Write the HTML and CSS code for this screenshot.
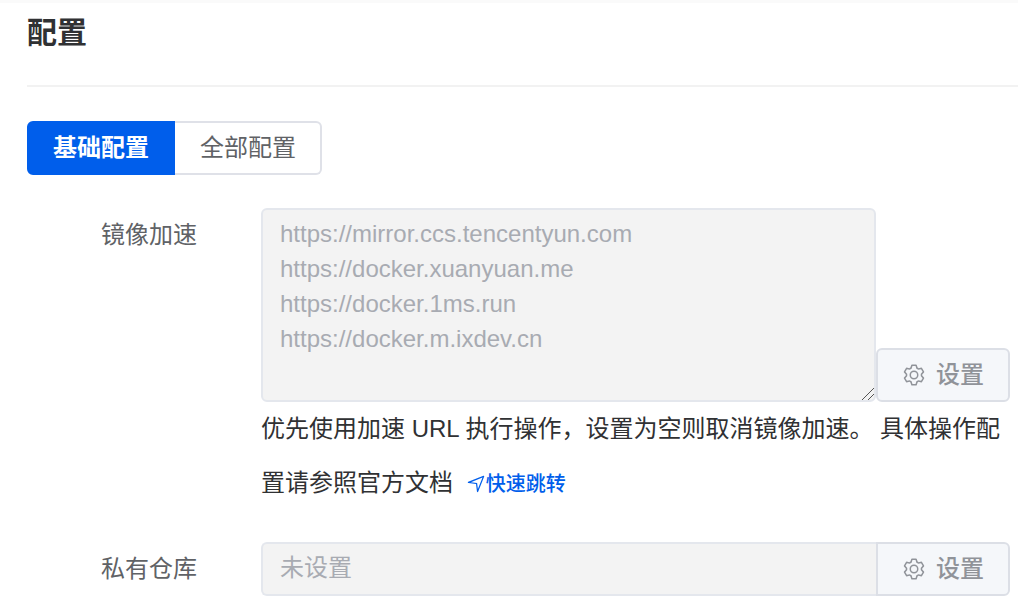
FILE: index.html
```html
<!DOCTYPE html>
<html lang="zh-CN">
<head>
<meta charset="utf-8">
<meta name="viewport" content="width=device-width, initial-scale=1">
<title>配置</title>
<link rel="stylesheet" href="styles.css">
</head>
<body>
<svg class="sprite" aria-hidden="true">
  <symbol id="gear" viewBox="0 0 1024 1024">
    <path d="M600.704 64a32 32 0 0 1 30.464 22.208l35.2 109.376c14.784 7.232 28.928 15.36 42.432 24.512l112.384-24.192a32 32 0 0 1 34.432 15.36L944.32 364.8a32 32 0 0 1-4.032 37.504l-77.12 85.12a357.12 357.12 0 0 1 0 49.024l77.12 85.248a32 32 0 0 1 4.032 37.504l-88.704 153.6a32 32 0 0 1-34.432 15.296L708.8 803.904c-13.44 9.088-27.648 17.28-42.368 24.512l-35.264 109.376A32 32 0 0 1 600.704 960H423.296a32 32 0 0 1-30.464-22.208L357.696 828.48a351.616 351.616 0 0 1-42.56-24.64l-112.32 24.256a32 32 0 0 1-34.432-15.36L79.68 659.2a32 32 0 0 1 4.032-37.504l77.12-85.248a357.12 357.12 0 0 1 0-48.896l-77.12-85.248A32 32 0 0 1 79.68 364.8l88.704-153.6a32 32 0 0 1 34.432-15.296l112.32 24.256c13.568-9.152 27.776-17.408 42.56-24.64l35.2-109.312A32 32 0 0 1 423.232 64H600.64zm-23.424 64H446.72l-36.352 113.088-24.512 11.968a294.113 294.113 0 0 0-34.816 20.096l-22.656 15.36-116.224-25.088-65.28 113.152 79.68 88.192-1.92 27.136a293.12 293.12 0 0 0 0 40.192l1.92 27.136-79.808 88.192 65.344 113.152 116.224-25.024 22.656 15.296a294.113 294.113 0 0 0 34.816 20.096l24.512 11.968L446.72 896h130.688l36.48-113.152 24.448-11.904a288.282 288.282 0 0 0 34.752-20.096l22.592-15.296 116.288 25.024 65.28-113.152-79.744-88.192 1.92-27.136a293.12 293.12 0 0 0 0-40.256l-1.92-27.136 79.808-88.128-65.344-113.152-116.288 24.96-22.592-15.232a287.616 287.616 0 0 0-34.752-20.096l-24.448-11.904L577.344 128zM512 320a192 192 0 1 1 0 384 192 192 0 0 1 0-384m0 64a128 128 0 1 0 0 256 128 128 0 0 0 0-256"/>
  </symbol>
  <symbol id="plane" viewBox="0 0 1024 1024">
    <path d="m249.6 417.088 319.744 43.072 39.168 310.272L845.12 178.88 249.6 417.088zm-129.024 47.168a32 32 0 0 1-7.68-61.44l777.792-311.04a32 32 0 0 1 41.6 41.6l-310.336 775.68a32 32 0 0 1-61.44-7.808L512 516.992l-391.424-52.736z"/>
  </symbol>
</svg>
<main class="page">
  <header class="page-header"><h1 class="title">配置</h1></header>
  <div class="tabs" role="radiogroup" aria-label="配置">
    <label class="tab"><input class="tab-input" type="radio" name="mode" checked><span class="tab-text">基础配置</span></label>
    <label class="tab"><input class="tab-input" type="radio" name="mode"><span class="tab-text">全部配置</span></label>
  </div>
  <form class="form">
    <div class="row">
      <label class="label" for="mirrors">镜像加速</label>
      <div class="content">
        <div class="group">
          <textarea class="field area" id="mirrors" rows="5" disabled>https://mirror.ccs.tencentyun.com
https://docker.xuanyuan.me
https://docker.1ms.run
https://docker.m.ixdev.cn</textarea>
          <button class="set" type="button"><svg class="gear"><use href="#gear"/></svg>设置</button>
        </div>
        <p class="help">优先使用加速 URL 执行操作，设置为空则取消镜像加速。 具体操作配置请参照官方文档 <a class="link" href="#docs"><svg class="plane"><use href="#plane"/></svg>快速跳转</a></p>
      </div>
    </div>
    <div class="row">
      <label class="label" for="registry">私有仓库</label>
      <div class="content">
        <div class="group joined">
          <input class="field" id="registry" type="text" value="未设置" disabled>
          <button class="set" type="button"><svg class="gear"><use href="#gear"/></svg>设置</button>
        </div>
      </div>
    </div>
  </form>
</main>
</body>
</html>
```
FILE: styles.css
```css
* { box-sizing: border-box; }

body {
  margin: 0;
  border-top: 3px solid #fafafa;
  background: #fff;
  color: #303133;
  font: 24px/54px "Liberation Sans", "Noto Sans CJK SC", sans-serif;
}

.sprite { display: none; }

.page { padding-left: 27px; }

.page-header {
  padding: 9px 0 31px;
  border-bottom: 2px solid #f2f2f2;
}

.title {
  margin: 0;
  font-size: 30px;
  line-height: 42px;
  font-weight: 700;
}

.tabs {
  display: flex;
  margin: 34px 0 33px;
}

.tab { position: relative; cursor: pointer; }

.tab-input {
  position: absolute;
  opacity: 0;
}

.tab-text {
  display: block;
  padding: 0 24px;
  border: 2px solid #dfe1e8;
  border-left: 0;
  border-radius: 0 6px 6px 0;
  color: #606266;
  line-height: 50px;
}

.tab:first-child .tab-text {
  border-left: 2px solid #dfe1e8;
  border-radius: 6px 0 0 6px;
}

.tab:last-child .tab-text { padding-left: 25px; }

.tab-input:checked + .tab-text {
  border-color: #005eeb;
  background: #005eeb;
  color: #fff;
  font-weight: 700;
}

.form {
  display: grid;
  gap: 32px;
  padding-right: 8px;
}

.row {
  display: grid;
  grid-template-columns: 170px 1fr;
  column-gap: 64px;
}

.label {
  color: #606266;
  text-align: right;
}

.content { min-width: 0; }

.group {
  display: flex;
  align-items: flex-end;
}

.field {
  flex: 1;
  min-width: 0;
  height: 54px;
  padding: 0 17px 2px;
  border: 2px solid #e4e7ed;
  border-radius: 6px;
  background: #f3f3f3;
  color: #a8abb2;
  font: inherit;
}

.area {
  height: auto;
  padding: 6px 17px 9px;
  line-height: 35px;
  resize: both;
}

.area::-webkit-resizer {
  background: linear-gradient(135deg, transparent 46%, #555 46%, #555 54%, transparent 54%, transparent 71%, #555 71%, #555 79%, transparent 79%) right bottom / 12px 12px no-repeat;
}

.set {
  display: flex;
  align-items: center;
  gap: 10px;
  height: 54px;
  padding: 0 24px;
  border: 2px solid #dcdfe6;
  border-radius: 6px;
  background: #f5f7fa;
  color: #909399;
  font: inherit;
  font-weight: 500;
  line-height: 50px;
}

.joined .field {
  border-right: 0;
  border-radius: 6px 0 0 6px;
}

.joined .set { border-radius: 0 6px 6px 0; }

.gear {
  width: 24px;
  height: 24px;
  fill: currentColor;
}

.help { margin: 0; }

.link {
  margin-left: 6px;
  color: #005eeb;
  font-size: 20px;
  font-weight: 500;
  line-height: 28px;
  text-decoration: none;
}

.plane {
  width: 20px;
  height: 20px;
  fill: currentColor;
  vertical-align: -3px;
}
```
